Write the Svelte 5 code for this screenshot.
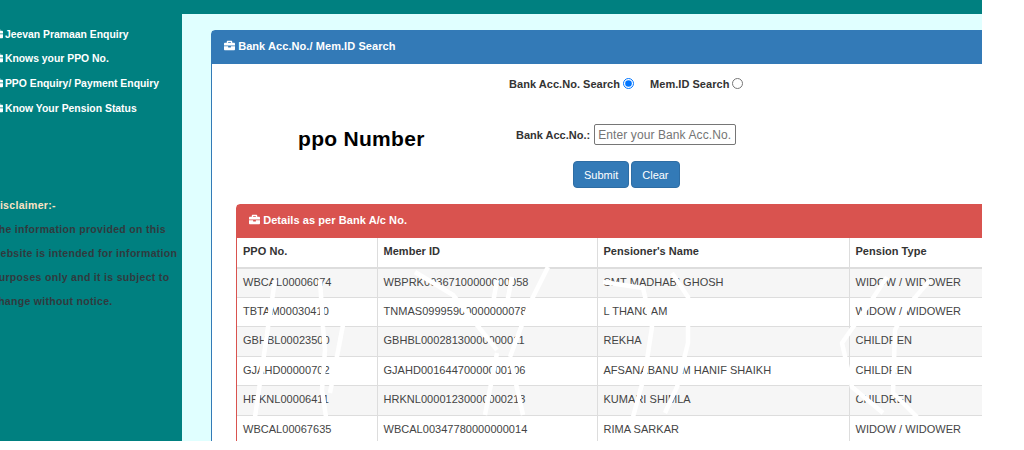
<script>
  const links = ['Jeevan Pramaan Enquiry', 'Knows your PPO No.', 'PPO Enquiry/ Payment Enquiry', 'Know Your Pension Status']
  const notes = ['The information provided on this', 'website is intended for information', 'purposes only and it is subject to', 'change without notice.']

  const rows = [
    ['WBCAL00006074', 'WBPRK00367100000000058', 'SMT MADHABI GHOSH', 'WIDOW / WIDOWER'],
    ['TBTAM00030410', 'TNMAS09995900000000078', 'L THANGAM', 'WIDOW / WIDOWER'],
    ['GBHBL00023500', 'GBHBL00028130000000011', 'REKHA', 'CHILDREN'],
    ['GJAHD00000702', 'GJAHD00164470000000106', 'AFSANABANU M HANIF SHAIKH', 'CHILDREN'],
    ['HRKNL00006411', 'HRKNL00001230000000213', 'KUMARI SHIMLA', 'CHILDREN'],
    ['WBCAL00067635', 'WBCAL00347780000000014', 'RIMA SARKAR', 'WIDOW / WIDOWER']
  ]

  const marks = [
    '275,280 268,327 255,417',
    '320,280 323,327 325,350 322,390 326,417',
    '343,325 330,393',
    '415,272 453,295 497,350',
    '548,267 530,303 510,357',
    '497,280 493,303',
    '512,277 507,303',
    '497,353 485,415',
    '510,357 523,415',
    '603,282 643,288 652,327 645,373 633,417',
    '672,273 688,297 688,343 677,387 665,413',
    '887,277 867,307 842,343 852,387 883,413',
    '930,280 907,307 895,330 893,393 917,417'
  ]

  const briefcase =
    'M320 336c0 8.84-7.16 16-16 16h-96c-8.84 0-16-7.16-16-16v-48H0v144c0 25.6 22.4 48 48 48h416c25.6 0 48-22.4 48-48V288H320v48zm144-208h-80V80c0-25.6-22.4-48-48-48H176c-25.6 0-48 22.4-48 48v48H48c-25.6 0-48 22.4-48 48v80h512v-80c0-25.6-22.4-48-48-48zm-144 0H192V96h128v32z'
</script>

<div class="page">
  <aside class="side">
    <ul class="links">
      {#each links as link}
        <li>
          <svg class="icon" viewBox="0 0 512 512"><path d={briefcase} /></svg>
          {link}
        </li>
      {/each}
    </ul>
    <div class="disclaimer">
      <h4>Disclaimer:-</h4>
      {#each notes as note}
        <p>{note}</p>
      {/each}
    </div>
  </aside>

  <main class="main">
    <section class="panel">
      <header class="panel-head">
        <svg class="icon" viewBox="0 0 512 512"><path d={briefcase} /></svg>
        Bank Acc.No./ Mem.ID Search
      </header>
      <div class="panel-body">
        <div class="radios">
          <label>Bank Acc.No. Search <input type="radio" name="kind" checked /></label>
          <label>Mem.ID Search <input type="radio" name="kind" /></label>
        </div>

        <div class="search">
          <h2>ppo Number</h2>
          <label for="acc">Bank Acc.No.:</label>
          <input id="acc" type="text" placeholder="Enter your Bank Acc.No." />
        </div>

        <div class="actions">
          <button>Submit</button>
          <button>Clear</button>
        </div>

        <section class="results">
          <header class="results-head">
            <svg class="icon" viewBox="0 0 512 512"><path d={briefcase} /></svg>
            Details as per Bank A/c No.
          </header>
          <table>
            <colgroup>
              <col style="width: 140px" />
              <col style="width: 220px" />
              <col style="width: 252px" />
              <col />
            </colgroup>
            <thead>
              <tr>
                <th>PPO No.</th>
                <th>Member ID</th>
                <th>Pensioner's Name</th>
                <th>Pension Type</th>
              </tr>
            </thead>
            <tbody>
              {#each rows as row}
                <tr>
                  {#each row as cell}
                    <td>{cell}</td>
                  {/each}
                </tr>
              {/each}
            </tbody>
          </table>
        </section>
      </div>
    </section>
  </main>

  <svg class="marks" viewBox="0 0 982 441">
    {#each marks as points}
      <polyline {points} />
    {/each}
  </svg>
</div>

<style>
  :global(body) {
    background: #fff;
  }
  .page {
    position: relative;
    display: flex;
    width: 982px;
    height: 441px;
    overflow: hidden;
    background: #008080;
    font-family: 'Liberation Sans', Arial, sans-serif;
    font-size: 11px;
    color: #333;
  }
  .icon {
    width: 11px;
    height: 11px;
    fill: currentColor;
    vertical-align: -1px;
  }

  .side {
    flex: 0 0 182px;
    overflow: hidden;
  }
  .links {
    list-style: none;
    margin: 22.5px 0 0 -8px;
    padding: 0;
    color: #fff;
    font-size: 10.4px;
    font-weight: bold;
  }
  .links li {
    height: 24.8px;
    line-height: 24.8px;
    white-space: nowrap;
  }
  .links .icon {
    margin-right: -1px;
  }
  .disclaimer {
    margin: 71.5px 0 0 -8px;
    white-space: nowrap;
    font-size: 10.5px;
    font-weight: bold;
    letter-spacing: 0.31px;
    color: #303a3e;
  }
  .disclaimer h4 {
    margin: 0;
    font-size: 10.5px;
    line-height: 24px;
    color: #fbe3c4;
  }
  .disclaimer p {
    margin: 0;
    line-height: 24px;
  }

  .main {
    flex: 1;
    min-width: 0;
    margin-top: 14px;
    padding: 15.5px 0 0 29px;
    overflow: hidden;
    background: #e0ffff;
  }
  .panel {
    width: 800px;
    height: 500px;
    background: #fff;
    border: 1px solid #337ab7;
    border-radius: 4px;
  }
  .panel-head {
    height: 33px;
    line-height: 31px;
    padding-left: 12px;
    background: #337ab7;
    color: #fff;
    font-weight: bold;
    letter-spacing: 0.07px;
    white-space: nowrap;
  }
  .panel-body {
    padding: 0 0 0 24px;
  }

  .radios {
    display: flex;
    gap: 16px;
    padding: 12.5px 0 0 273px;
    height: 20px;
    font-weight: bold;
    letter-spacing: 0.04px;
  }
  .radios label {
    display: flex;
    align-items: center;
    gap: 3px;
    height: 16px;
  }
  .radios input {
    width: 11px;
    height: 11px;
    margin: 0 0 2px;
  }

  .search {
    display: flex;
    align-items: center;
    height: 24px;
    margin-top: 26.5px;
  }
  .search h2 {
    width: 280px;
    margin: 0;
    padding: 8px 0 0 62px;
    box-sizing: border-box;
    font-size: 21px;
    font-weight: bold;
    color: #000;
    letter-spacing: 0.3px;
    white-space: nowrap;
    flex: none;
  }
  .search h2 + label {
    font-weight: bold;
    margin-right: 4px;
  }
  .search input {
    width: 142px;
    height: 21px;
    box-sizing: border-box;
    padding: 0 3px;
    border: 1px solid #767676;
    border-radius: 2px;
    font: 12px 'Liberation Sans', Arial, sans-serif;
    letter-spacing: 0.1px;
  }
  .search input::placeholder {
    color: #757575;
  }

  .actions {
    display: flex;
    gap: 2px;
    margin-top: 14.5px;
    padding-left: 337px;
  }
  .actions button {
    height: 27px;
    padding: 0 10px;
    background: #337ab7;
    border: 1px solid #2e6da4;
    border-radius: 4px;
    color: #fff;
    font: 11px 'Liberation Sans', Arial, sans-serif;
  }

  .results {
    margin-top: 16px;
    width: 780px;
    background: #fff;
    border: 1px solid #d9534f;
    border-radius: 4px;
  }
  .results-head {
    height: 33px;
    line-height: 31px;
    padding-left: 12px;
    background: #d9534f;
    color: #fff;
    font-weight: bold;
    letter-spacing: 0.07px;
  }
  table {
    width: 100%;
    table-layout: fixed;
    border-collapse: collapse;
  }
  th,
  td {
    height: 29.5px;
    padding: 0 6px 2px;
    box-sizing: border-box;
    border: 1px solid #ddd;
    text-align: left;
    white-space: nowrap;
    letter-spacing: 0.03px;
  }
  th {
    border-bottom-width: 2px;
    border-top: 0;
  }
  td {
    color: #444;
  }
  th:first-child,
  td:first-child {
    border-left: 0;
  }
  tbody tr:nth-child(odd) {
    background: #f6f6f6;
  }

  .marks {
    position: absolute;
    left: 0;
    top: 0;
    width: 982px;
    height: 441px;
    pointer-events: none;
  }
  .marks polyline {
    fill: none;
    stroke: #fff;
    stroke-width: 4.5;
    stroke-linejoin: round;
  }
</style>
